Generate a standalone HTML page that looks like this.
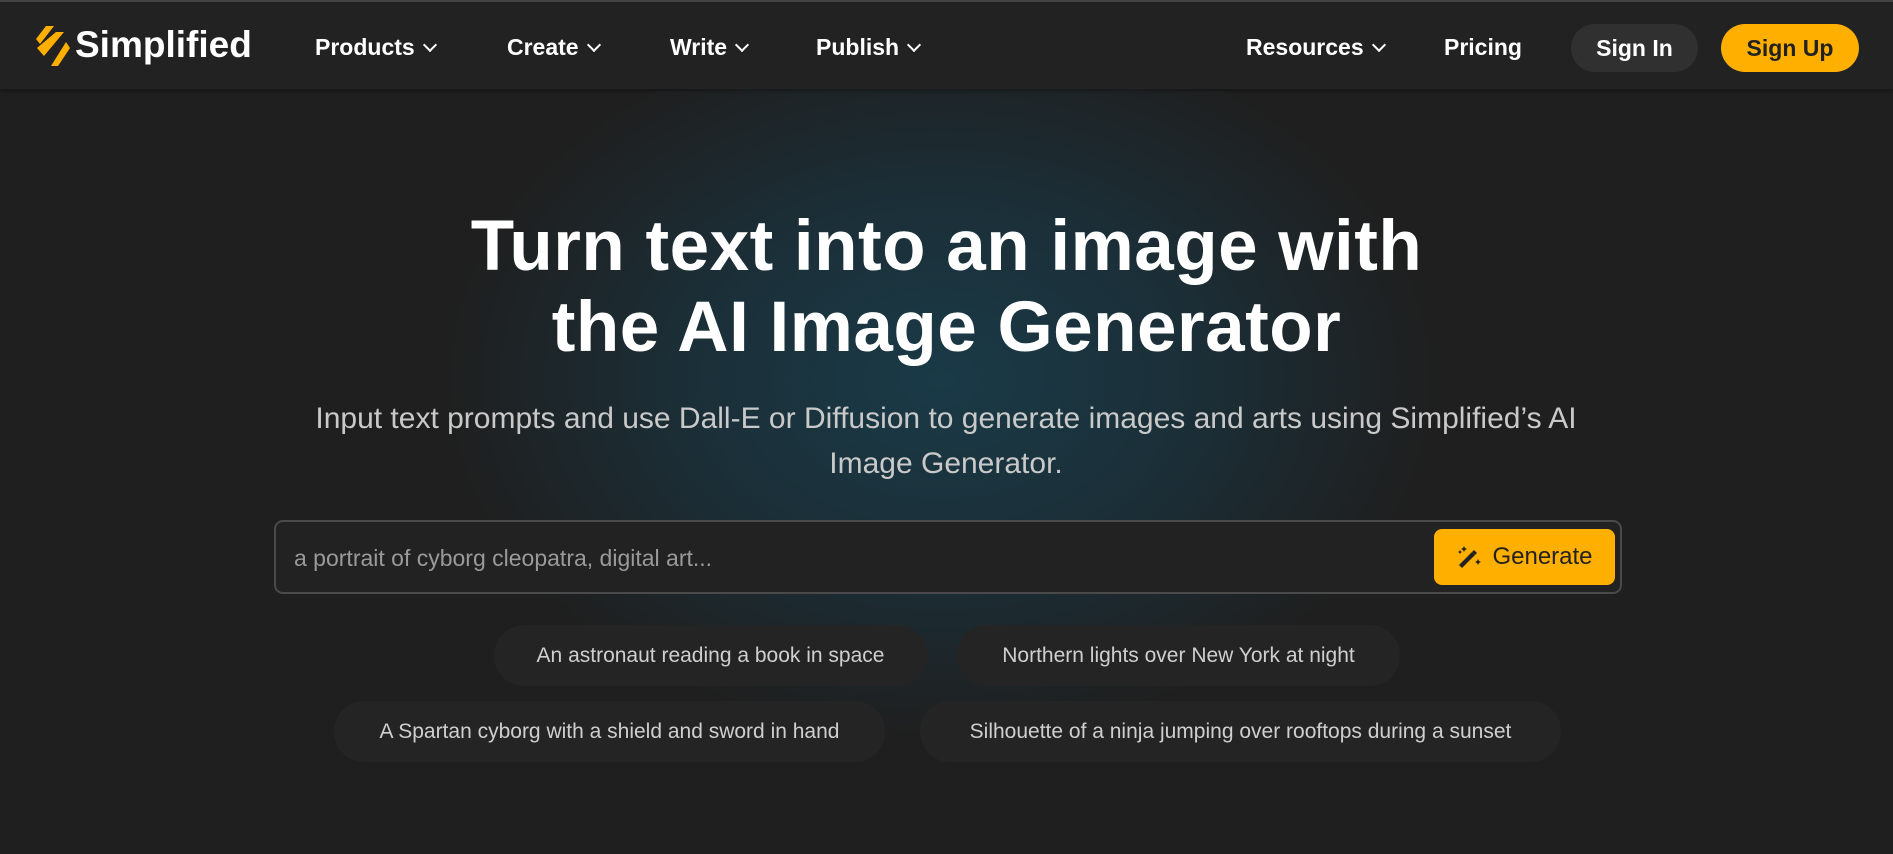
<!DOCTYPE html>
<html><head><meta charset="utf-8"><style>
*{margin:0;padding:0;box-sizing:border-box}
body{width:1893px;height:854px;overflow:hidden;background:#1f1f1f;font-family:"Liberation Sans",sans-serif;position:relative;color:#fff}
.glow{position:absolute;left:440px;top:20px;width:1000px;height:720px;border-radius:50%;background:radial-gradient(ellipse at center,#1a3a47 0%,#1b2f38 35%,rgba(31,31,31,0) 70%)}
.nav{position:absolute;left:0;top:0;width:1893px;height:89px;background:#222;border-top:2px solid #444;box-shadow:0 2px 4px rgba(0,0,0,.3)}
.a{position:absolute;font-weight:bold;font-size:23px;top:32px;color:#fff;white-space:nowrap}
.chev{display:inline-block;width:10px;height:10px;border-right:2px solid #fff;border-bottom:2px solid #fff;transform:rotate(45deg);margin-left:10px;position:relative;top:-5px}
.btn{position:absolute;top:22px;height:48px;border-radius:24px;font-weight:bold;font-size:23px;display:flex;align-items:center;justify-content:center}
h1{position:absolute;left:0;width:1893px;text-align:center;font-size:71px;font-weight:bold;line-height:81px;top:206px;letter-spacing:.5px}
.sub{position:absolute;left:296px;width:1300px;text-align:center;font-size:30px;line-height:45px;top:396px;color:#c9c9c9}
.inp{position:absolute;left:274px;top:520px;width:1348px;height:74px;border:2px solid #4a4a4a;border-radius:9px;background:#222}
.ph{position:absolute;left:18px;top:23px;font-size:23px;color:#9a9a9a}
.gen{position:absolute;left:1158px;top:7px;width:181px;height:56px;border-radius:8px;background:#ffaf00;color:#222;font-size:24px;display:flex;align-items:center;justify-content:center;gap:10px}
.chip{position:absolute;height:61px;border-radius:30px;background:#242424;color:#cfcfcf;font-size:21px;display:flex;align-items:center;justify-content:center;white-space:nowrap}
</style></head><body>
<div class="glow"></div>
<div class="nav">
<svg style="position:absolute;left:36px;top:24px" width="34" height="42" viewBox="0 0 34 42"><path d="M10 0 L18 0 L4 18 L0 13 Z" fill="#ffaf00"/><path d="M20 6 L28 6 L8 30 L1 22 Z" fill="#ffaf00"/><path d="M30 16 L34 22 L22 40 L15 40 Z" fill="#ffaf00"/></svg>
<div class="a" style="left:75px;top:22px;font-size:37px">Simplified</div>
<div class="a" style="left:315px">Products<span class="chev"></span></div>
<div class="a" style="left:507px">Create<span class="chev"></span></div>
<div class="a" style="left:670px">Write<span class="chev"></span></div>
<div class="a" style="left:816px">Publish<span class="chev"></span></div>
<div class="a" style="left:1246px">Resources<span class="chev"></span></div>
<div class="a" style="left:1444px">Pricing</div>
<div class="btn" style="left:1571px;width:127px;background:#303030;color:#fff">Sign In</div>
<div class="btn" style="left:1721px;width:138px;background:#ffaf00;color:#222">Sign Up</div>
</div>
<h1>Turn text into an image with<br>the AI Image Generator</h1>
<div class="sub">Input text prompts and use Dall-E or Diffusion to generate images and arts using Simplified’s AI Image Generator.</div>
<div class="inp"><div class="ph">a portrait of cyborg cleopatra, digital art...</div>
<div class="gen"><svg width="26" height="26" viewBox="0 0 26 26"><path d="M3 21 L16 8 L19 11 L6 24 Z" fill="#222"/><path d="M16 8 L18 6 L21 9 L19 11 Z" fill="#222"/><path d="M8 2 l1 2 2 1 -2 1 -1 2 -1-2 -2-1 2-1z M22 15 l1 2 2 1 -2 1 -1 2 -1-2 -2-1 2-1z M4 6 l.7 1.3 1.3.7 -1.3.7 -.7 1.3 -.7-1.3 -1.3-.7 1.3-.7z" fill="#222"/></svg>Generate</div></div>
<div class="chip" style="left:494px;top:625px;width:433px">An astronaut reading a book in space</div>
<div class="chip" style="left:957px;top:625px;width:443px">Northern lights over New York at night</div>
<div class="chip" style="left:334px;top:701px;width:551px">A Spartan cyborg with a shield and sword in hand</div>
<div class="chip" style="left:920px;top:701px;width:641px">Silhouette of a ninja jumping over rooftops during a sunset</div>
</body></html>
